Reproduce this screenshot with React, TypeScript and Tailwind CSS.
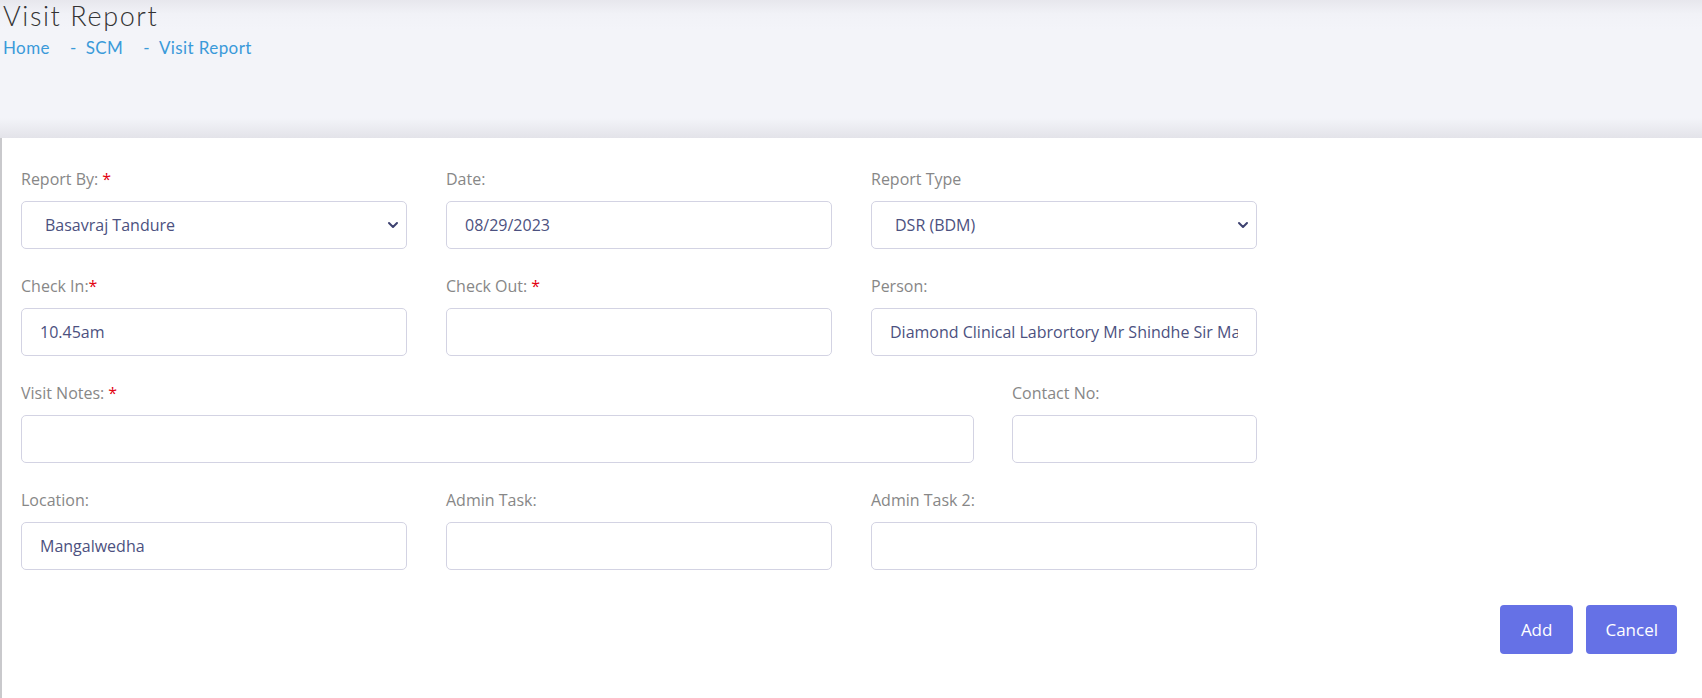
import React from 'react';

const labelCls = 'block text-[16px] leading-[24px] text-[#878787] mb-[10px]';
const boxCls =
  'block w-full h-[48px] rounded-[5px] border border-[#d3d3e3] bg-white px-[18px] text-[16px] text-[#4c5180] outline-none';

function Req() {
  return <span className="text-[#e3000f] ml-[4px]">*</span>;
}

function Field({ label, required, tight, children }: { label: string; required?: boolean; tight?: boolean; children: React.ReactNode }) {
  return (
    <div>
      <label className={labelCls}>
        {label}
        {required && (tight ? <span className="text-[#e3000f]">*</span> : <Req />)}
      </label>
      {children}
    </div>
  );
}

function TextBox({ value }: { value?: string }) {
  return <input type="text" defaultValue={value} className={boxCls} />;
}

function SelectBox({ value }: { value: string }) {
  return (
    <div className="relative">
      <select defaultValue={value} className={boxCls + ' appearance-none pl-[23px]'}>
        <option>{value}</option>
      </select>
      <svg
        className="absolute right-[8px] top-1/2 -translate-y-1/2 pointer-events-none"
        width="12"
        height="8"
        viewBox="0 0 12 8"
        fill="none"
      >
        <path d="M2 2l4 4 4-4" stroke="#3d4270" strokeWidth="2" strokeLinecap="round" strokeLinejoin="round" />
      </svg>
    </div>
  );
}

export default function App() {
  return (
    <div className="w-[1702px] h-[698px] overflow-hidden bg-white" style={{ fontFamily: '"Open Sans", sans-serif' }}>
      {/* page heading band */}
      <div className="h-[138px] bg-[linear-gradient(to_bottom,#e7e7ed_0px,#f1f2f7_14px,#f3f4f9_30px,#f3f4f9_118px,#e3e3e9_138px)] pl-[3px]">
        <h1 className="text-[27px] leading-[32px] tracking-[1.6px] text-[#333] font-light" style={{ fontFamily: 'Lato, sans-serif' }}>
          Visit Report
        </h1>
        <nav className="mt-[4px] text-[17px] leading-[24px] tracking-[0.4px] text-[#3a9ad9] flex" style={{ fontFamily: 'Lato, sans-serif' }}>
          <span>Home</span>
          <span className="ml-[20px]">-</span>
          <span className="ml-[9px]">SCM</span>
          <span className="ml-[20px]">-</span>
          <span className="ml-[9px]">Visit Report</span>
        </nav>
      </div>

      {/* form card */}
      <div className="h-[560px] border-l-2 border-[#c9c9cc] pl-[19px] pt-[29px]">
        <div className="w-[1236px] flex flex-col gap-y-[25px]">
          <div className="grid grid-cols-[386px_386px_386px] gap-x-[39px]">
            <Field label="Report By:" required>
              <SelectBox value="Basavraj Tandure" />
            </Field>
            <Field label="Date:">
              <TextBox value="08/29/2023" />
            </Field>
            <Field label="Report Type">
              <SelectBox value="DSR (BDM)" />
            </Field>
          </div>

          <div className="grid grid-cols-[386px_386px_386px] gap-x-[39px]">
            <Field label="Check In:" required tight>
              <TextBox value="10.45am" />
            </Field>
            <Field label="Check Out:" required>
              <TextBox />
            </Field>
            <Field label="Person:">
              <TextBox value="Diamond Clinical Labrortory Mr Shindhe Sir Mangalwedha" />
            </Field>
          </div>

          <div className="flex gap-x-[38px]">
            <div className="flex-1">
              <Field label="Visit Notes:" required>
                <TextBox />
              </Field>
            </div>
            <div className="w-[245px]">
              <Field label="Contact No:">
                <TextBox />
              </Field>
            </div>
          </div>

          <div className="grid grid-cols-[386px_386px_386px] gap-x-[39px]">
            <Field label="Location:">
              <TextBox value="Mangalwedha" />
            </Field>
            <Field label="Admin Task:">
              <TextBox />
            </Field>
            <Field label="Admin Task 2:">
              <TextBox />
            </Field>
          </div>
        </div>

        <div className="flex justify-end gap-x-[13px] pr-[25px] mt-[35px]">
          <button className="h-[49px] px-[21px] rounded-[4px] bg-[#6571e6] text-white text-[17px]">Add</button>
          <button className="h-[49px] px-[19px] rounded-[4px] bg-[#6571e6] text-white text-[17px]">Cancel</button>
        </div>
      </div>
    </div>
  );
}
